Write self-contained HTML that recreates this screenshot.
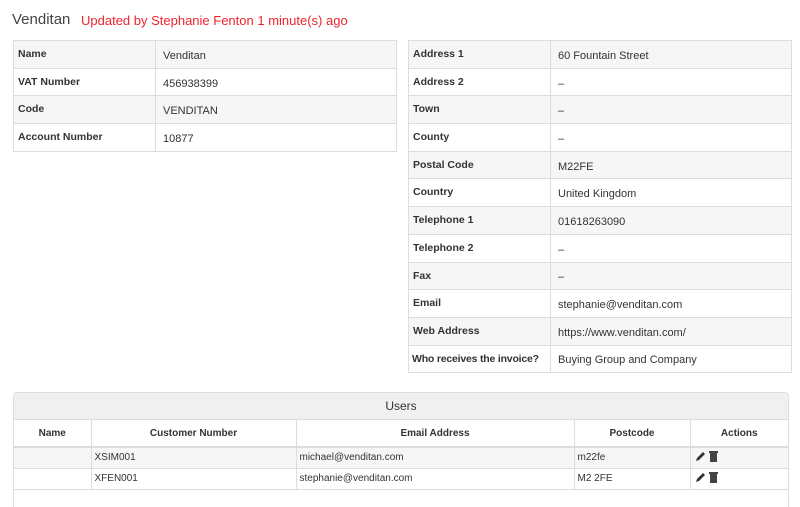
<!DOCTYPE html>
<html><head><style>
html,body{margin:0;width:800px;height:507px;overflow:hidden}
body{background:#fff;font-family:"Liberation Sans",sans-serif;color:#333;position:relative}
.t{position:absolute;font-size:15px;left:12px;top:11px;color:#444}
.u{position:absolute;left:81px;top:13px;font-size:13px;color:#f0232d}
table{border-collapse:collapse;position:absolute;font-size:11px}
.kv td{border:1px solid #ddd;height:27.7px;padding:0 5px;box-sizing:border-box;white-space:nowrap}
.kv td.l{font-weight:bold;vertical-align:top;padding-top:7px;font-size:10.5px;padding-left:4px}
.kv td.v{padding-left:7px;padding-top:3px}
.kv tr:nth-child(odd) td{background:#f6f6f6}
.panel{position:absolute;left:13px;top:392px;width:776px;height:115px;border:1px solid #ddd;border-bottom:0;border-radius:4px 4px 0 0;box-sizing:border-box;overflow:hidden}
.ph{height:26px;background:#f0f0f0;border-bottom:1px solid #ddd;text-align:center;line-height:26px;font-size:12px;color:#333}
.ut{position:static;width:100%;font-size:10px}
.ut th{height:27px;border-right:1px solid #ddd;border-bottom:2px solid #ddd;font-weight:bold;text-align:center;box-sizing:border-box;padding:0}
.ut td{height:21px;border-right:1px solid #ddd;border-bottom:1px solid #ddd;padding:0 3px;box-sizing:border-box}
.ut tr.g td{background:#f6f6f6}
.ut th:last-child,.ut td:last-child{border-right:0}
</style></head><body>
<div class="t">Venditan</div>
<div class="u">Updated by Stephanie Fenton 1 minute(s) ago</div>
<table class="kv" style="left:13px;top:40px;width:384px">
<tr><td class="l" style="width:142px">Name</td><td class="v">Venditan</td></tr>
<tr><td class="l">VAT Number</td><td class="v">456938399</td></tr>
<tr><td class="l">Code</td><td class="v">VENDITAN</td></tr>
<tr><td class="l">Account Number</td><td class="v">10877</td></tr>
</table>
<table class="kv" style="left:408px;top:40px;width:384px">
<tr><td class="l" style="width:142px">Address 1</td><td class="v">60 Fountain Street</td></tr>
<tr><td class="l">Address 2</td><td class="v">–</td></tr>
<tr><td class="l">Town</td><td class="v">–</td></tr>
<tr><td class="l">County</td><td class="v">–</td></tr>
<tr><td class="l">Postal Code</td><td class="v">M22FE</td></tr>
<tr><td class="l">Country</td><td class="v">United Kingdom</td></tr>
<tr><td class="l">Telephone 1</td><td class="v">01618263090</td></tr>
<tr><td class="l">Telephone 2</td><td class="v">–</td></tr>
<tr><td class="l">Fax</td><td class="v">–</td></tr>
<tr><td class="l">Email</td><td class="v">stephanie@venditan.com</td></tr>
<tr><td class="l">Web Address</td><td class="v">https://www.venditan.com/</td></tr>
<tr><td class="l" style="padding-left:3px;padding-right:1px;letter-spacing:-0.2px">Who receives the invoice?</td><td class="v">Buying Group and Company</td></tr>
</table>
<div class="panel">
<div class="ph">Users</div>
<table class="ut">
<tr><th style="width:77px">Name</th><th style="width:205px">Customer Number</th><th style="width:278px">Email Address</th><th style="width:116px">Postcode</th><th>Actions</th></tr>
<tr class="g"><td></td><td>XSIM001</td><td>michael@venditan.com</td><td>m22fe</td><td><svg width="26" height="12" viewBox="0 0 26 12"><path d="M2 11 L3 8 L9 2 L11 4 L5 10 Z" fill="#333"/><rect x="16" y="3" width="7" height="9" fill="#444"/><rect x="15" y="1" width="9" height="2" fill="#444"/></svg></td></tr>
<tr><td></td><td>XFEN001</td><td>stephanie@venditan.com</td><td>M2 2FE</td><td><svg width="26" height="12" viewBox="0 0 26 12"><path d="M2 11 L3 8 L9 2 L11 4 L5 10 Z" fill="#333"/><rect x="16" y="3" width="7" height="9" fill="#444"/><rect x="15" y="1" width="9" height="2" fill="#444"/></svg></td></tr>
</table>
</div>
</body></html>
